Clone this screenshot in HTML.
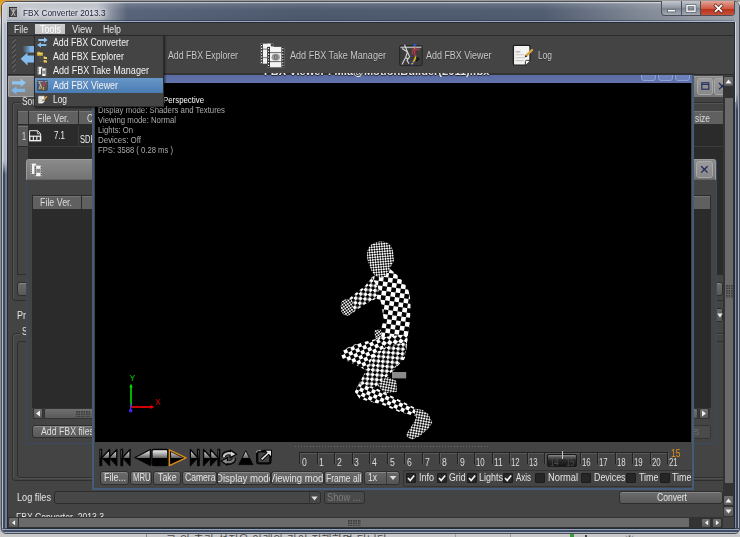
<!DOCTYPE html>
<html><head><meta charset="utf-8"><title>FBX Converter 2013.3</title>
<style>
*{box-sizing:border-box;margin:0;padding:0}
html,body{width:740px;height:537px;overflow:hidden;background:#d9d9d9;font-family:"Liberation Sans",sans-serif}
body{position:relative}
.a{position:absolute}
.t{position:absolute;white-space:pre;transform-origin:0 50%;display:block}
.btn{position:absolute;border:1px solid #2e2e2e;border-radius:3px;background:linear-gradient(#6c6c6c,#595959);box-shadow:inset 0 1px 0 #868686;overflow:hidden}
.hdr{position:absolute;background:#606060;border-top:1px solid #737373;border-bottom:1px solid #2c2c2c}
.cb{position:absolute;width:10px;height:10px;background:#262626;border:1px solid #1c1c1c;border-radius:1px}
.sbtn{position:absolute;background:linear-gradient(#707070,#5a5a5a);border:1px solid #333;border-radius:2px}
</style></head><body>


<!-- desktop strip below window -->
<div class="a" style="left:0;top:533px;width:740px;height:4px;background:#c8c8c8;overflow:hidden;font-family:'Liberation Sans','Noto Sans CJK KR',sans-serif">
  <div class="a" style="left:146px;top:0;width:1px;height:4px;background:#8a8a8a"></div>
  <span class="a" style="left:166px;top:0.500px;font-size:11px;line-height:12px;color:#4a4a4a;white-space:pre;letter-spacing:0.3px">그 외 추가 설정은 아래와 같이 진행하면 됩니다</span>
  <div class="a" style="left:455px;top:0;width:1px;height:4px;background:#9a9a9a"></div>
  <div class="a" style="left:510px;top:0;width:1px;height:4px;background:#9a9a9a"></div>
  <div class="a" style="left:570px;top:1px;width:4px;height:3px;background:#3a9a3a"></div>
  <div class="a" style="left:585px;top:1.500px;width:2px;height:3px;background:#444"></div>
  <span class="a" style="left:610px;top:0.500px;font-size:11px;line-height:12px;color:#555;white-space:pre">▼ ※ ■ ◧ ⊞</span>
</div>

<!-- window frame -->
<div class="a" style="left:0;top:0;width:3px;height:537px;background:linear-gradient(#e8a020 0,#f0b030 12px,#d9d9d9 20px,#a4a8ae 40px,#9a9ea4 160px,#8c9096 175px,#8c9096 525px,#c8c8c8 533px)"></div>
<div class="a" style="left:0;top:0;width:740px;height:2px;background:linear-gradient(90deg,#e09a20 0,#b0a090 30px,#9a9a9a 60px,#9a9a9a 100%)"></div>
<div class="a" id="frame" style="left:1px;top:1px;width:739px;height:533px;border-radius:6px 6px 5px 5px;border:1px solid #4a4f58;overflow:hidden;background:#8b98b2">
  <div class="a" style="left:0;top:0;width:740px;height:21px;background:linear-gradient(90deg,#bcc0c8 0,#b9bdc5 95px,#5a667c 125px,#4f5b70 300px,#525e73 540px,#838b98 640px,#9aa0aa 700px,#a2a7b0 100%)"></div>
  <div class="a" style="left:0;top:0;width:740px;height:21px;background:linear-gradient(rgba(255,255,255,.55) 0,rgba(255,255,255,.12) 2px,rgba(255,255,255,0) 8px,rgba(0,0,0,.06) 100%)"></div>
  <div class="a" style="left:5px;top:18px;width:729px;height:1px;background:linear-gradient(90deg,rgba(60,70,95,.25) 0,rgba(50,62,88,.75) 130px,rgba(50,62,88,.75) 560px,rgba(60,70,95,.3) 100%)"></div>
  <div class="a" style="left:5px;top:19px;width:729px;height:1px;background:rgba(190,200,215,.7)"></div>
  <div class="a" style="left:0;top:21px;width:6px;height:510px;background:linear-gradient(90deg,#a2a8b2 0,#9ea5b0 1px,#3c4962 1.400px,#3a4760 2.800px,#727c8c 3.200px,#727c8c 4.600px,#1e2838 5px)"></div>
  <div class="a" style="left:0;top:0;width:5px;height:175px;background:linear-gradient(#c6cbd4 0,#c2c8d2 158px,rgba(194,200,210,0) 172px)"></div>
  <div class="a" style="left:2px;top:21px;width:1.500px;height:140px;background:rgba(160,170,186,.55)"></div>
  <div class="a" style="left:732px;top:21px;width:6px;height:512px;background:linear-gradient(90deg,#1e2838 0,#1e2838 0.400px,#a4adbc 0.800px,#9aa4b6 1.400px,#3e4a64 1.800px,#3c4862 3.600px,#a4acba 4px,#a8b0be 5px,#a8b0be 6px)"></div>
  <div class="a" style="left:732.400px;top:0px;width:6px;height:120px;background:linear-gradient(rgba(160,166,176,1) 0,rgba(158,165,176,1) 92px,rgba(158,165,176,0) 108px)"></div>
  <div class="a" style="left:732.500px;top:20px;width:1px;height:80px;background:rgba(225,230,238,.8)"></div>
  <div class="a" style="left:0;top:526px;width:740px;height:6px;background:linear-gradient(#1e2838 0,#1e2838 0.400px,#9aa6b8 0.800px,#98a4b6 1.500px,#3e4c66 1.900px,#3e4c66 3.500px,#a8b0c0 3.900px,#aab2c2 100%)"></div>
  <div class="a" style="left:0;top:0;width:737px;height:531px;border-radius:5px;box-shadow:inset 1px 1px 0 rgba(255,255,255,.3)"></div>
</div>
<svg class="a" style="left:8.500px;top:6.800px" width="8.800" height="10.600" viewBox="0 0 10 12"><rect x="0.5" y="0.5" width="9" height="11" fill="#4a4a4a" stroke="#1e1e1e"/><path d="M2.5 2.5 L5 6 L3 10 M7.5 2.5 L5 6 L7 10 M5 1.5 V6" stroke="#cfcfcf" stroke-width="1" fill="none"/><rect x="1" y="1" width="8" height="1.6" fill="#8d8d8d"/></svg>
<span class="t" style="left:22.5px;top:6.5px;font-size:9.5px;line-height:12px;color:#1d1d3a;transform:scaleX(0.8727);text-shadow:0 0 4px #fff,0 0 7px #fff,0 0 10px #fff">FBX Converter 2013.3</span>

<!-- caption buttons -->
<div class="a" style="left:661px;top:1px;width:74px;height:15px;border:1px solid #4a4f58;border-top:none;border-radius:0 0 4px 4px;background:linear-gradient(#c3c8cf,#8f96a1 50%,#7d8591 51%,#a2a9b3);overflow:hidden">
  <div class="a" style="left:19px;top:0;width:1px;height:15px;background:#4a4f58"></div>
  <div class="a" style="left:38px;top:0;width:36px;height:15px;border-left:1px solid #4a4f58;background:linear-gradient(#e2a597,#cf5a45 50%,#b8321b 51%,#c9553c)"></div>
  <svg class="a" style="left:0;top:0" width="74" height="15" viewBox="0 0 74 15">
    <rect x="5.5" y="8.5" width="8" height="2.4" fill="#fff" stroke="#50555e" stroke-width="0.7"/>
    <rect x="25" y="4.6" width="8" height="5.6" fill="none" stroke="#50555e" stroke-width="2.6"/>
    <rect x="25" y="4.6" width="8" height="5.6" fill="none" stroke="#fff" stroke-width="1.4"/>
    <path d="M53.6 4.6 L59.4 10.2 M59.4 4.600 L53.6 10.2" stroke="#5a2a22" stroke-width="3.2" stroke-linecap="square"/>
    <path d="M53.6 4.6 L59.4 10.2 M59.4 4.600 L53.6 10.2" stroke="#fff" stroke-width="1.800" stroke-linecap="square"/>
  </svg>
</div>

<!-- client area -->
<div class="a" id="client" style="left:7px;top:22px;width:727.500px;height:506.500px;background:#444;border:1px solid #232b38"></div>

<!-- menubar -->
<div class="a" style="left:8px;top:35px;width:726px;height:1px;background:#2b2b2b"></div>
<span class="t" style="left:14px;top:23.5px;font-size:10px;line-height:12px;color:#e4e4e4;transform:scaleX(0.8682);">File</span>
<div class="a" style="left:35px;top:24px;width:30px;height:10px;background:linear-gradient(#d0d0d0,#c2c2c2)"></div>
<span class="t" style="left:40px;top:23.5px;font-size:10px;line-height:12px;color:#ffffff;transform:scaleX(0.8990);">Tools</span>
<span class="t" style="left:72px;top:23.5px;font-size:10px;line-height:12px;color:#e4e4e4;transform:scaleX(0.9302);">View</span>
<span class="t" style="left:103px;top:23.5px;font-size:10px;line-height:12px;color:#e4e4e4;transform:scaleX(0.8747);">Help</span>

<!-- toolbar -->
<div class="a" style="left:8px;top:74px;width:726px;height:1px;background:#2b2b2b"></div>
<div class="a" style="left:12px;top:38px;width:4px;height:34px;background:repeating-linear-gradient(135deg,#5c5c5c 0 1px,#363636 1px 2px,#444 2px 3.5px)"></div>
<svg class="a" style="left:16px;top:38px" width="22" height="34" viewBox="0 0 22 34"><defs><linearGradient id="ca" x1="0" x2="1"><stop offset="0" stop-color="#6ea7dc" stop-opacity="0.1"/><stop offset="0.5" stop-color="#79b1e6"/><stop offset="1" stop-color="#8cc0ef"/></linearGradient></defs><rect x="7" y="8" width="15" height="6.5" fill="url(#ca)"/><path d="M4.6 20.8 L11.5 14.5 V17.6 H22 V24.4 H11.5 V27.6 Z" fill="#86bbec"/></svg>
<span class="t" style="left:168px;top:49.5px;font-size:10px;line-height:12px;color:#c8c8c8;transform:scaleX(0.8745);text-shadow:0 1px 0 #2e2e2e">Add FBX Explorer</span>
<span class="t" style="left:290px;top:49.5px;font-size:10px;line-height:12px;color:#c8c8c8;transform:scaleX(0.9057);text-shadow:0 1px 0 #2e2e2e">Add FBX Take Manager</span>
<span class="t" style="left:425.6px;top:49.5px;font-size:10px;line-height:12px;color:#c8c8c8;transform:scaleX(0.8936);text-shadow:0 1px 0 #2e2e2e">Add FBX Viewer</span>
<span class="t" style="left:538px;top:49.5px;font-size:10px;line-height:12px;color:#c8c8c8;transform:scaleX(0.8390);text-shadow:0 1px 0 #2e2e2e">Log</span>


<!-- toolbar icons -->
<svg class="a" style="left:260px;top:43px" width="25" height="25" viewBox="0 0 25 25">
  <rect x="0.3" y="0.7" width="13" height="20" fill="#f2f2f2"/>
  <rect x="0.3" y="0.7" width="2.6" height="20" fill="#2c2c2c"/>
  <path d="M1.6 2 V20.5" stroke="#f4f4f4" stroke-width="1.1" stroke-dasharray="1.3 1.5"/>
  <rect x="3" y="5.6" width="10" height="1" fill="#777"/><rect x="3" y="14.2" width="10" height="1" fill="#777"/>
  <path d="M10 0.7 H13.3 V3.4 H10Z" fill="#444"/>
  <rect x="7.2" y="3.9" width="17" height="20.4" fill="#f4f4f4"/>
  <path d="M7.2 3.9 H10.8 V0.7 H7.2Z" fill="#f4f4f4"/>
  <rect x="7.2" y="3.9" width="2.8" height="20.4" fill="#2a2a2a"/><rect x="21.4" y="3.9" width="2.8" height="20.4" fill="#2a2a2a"/>
  <path d="M8.6 5 V24 M22.8 5 V24" stroke="#f4f4f4" stroke-width="1.1" stroke-dasharray="1.3 1.5"/>
  <rect x="10" y="9.2" width="11.4" height="0.9" fill="#555"/><rect x="10" y="18.2" width="11.4" height="0.9" fill="#555"/>
  <ellipse cx="15.7" cy="14.2" rx="4.2" ry="3.4" fill="#9a9a9a"/><ellipse cx="15.7" cy="14.2" rx="1.4" ry="2.3" fill="none" stroke="#555" stroke-width="0.8"/>
</svg>
<svg class="a" style="left:398px;top:42px" width="26" height="26" viewBox="0 0 26 26">
  <rect x="1.6" y="3.6" width="22.6" height="20" rx="1.6" fill="#3c3c3c" stroke="#262626" stroke-width="1"/>
  <rect x="2.4" y="4.6" width="21" height="1.5" fill="#a9adb2"/>
  <path d="M6.5 2.8 L9.5 10 L7.6 15.5 L4 22.5 M9.5 10 L4.2 6.5 M9.5 10 L11.6 14.8 L9 18.4 L11 21.8 M7.6 15.5 L10 17" stroke="#d6d6d6" stroke-width="1.1" fill="none"/>
  <path d="M15.2 3.2 C15.5 1.4 17.6 1.2 18.4 2.4 C18.8 3.4 18 4.8 16.6 5 Z" fill="#2f52c8"/>
  <path d="M16.4 5.2 L17.4 7 L21.6 8 M17 7 L14.6 8 L14.2 12.4 M16.8 7.2 L16.6 12.8 L18.4 14.4" stroke="#a83a4a" stroke-width="1.5" fill="none"/>
  <circle cx="16.5" cy="5.4" r="1" fill="#e6a85a"/>
  <path d="M18 14.4 L16.8 17.4 L15 20.4 L13.6 22.6" stroke="#d6b428" stroke-width="1.7" fill="none"/>
  <path d="M18.4 15 L20.6 17 L18 19" stroke="#141414" stroke-width="1.6" fill="none"/>
  <path d="M13 20.4 H15.6 M13.4 22.8 H15.8" stroke="#3a3ac0" stroke-width="1.1"/>
</svg>
<svg class="a" style="left:512px;top:44px" width="24" height="23" viewBox="0 0 24 23">
  <path d="M2.6 1.4 H16.4 Q18 1.4 18 3 V16.2 L13.4 21.2 H2.6 Q1.4 21.2 1.4 20 V2.6 Q1.4 1.4 2.6 1.4Z" fill="#f3f3f1" stroke="#1f1f1f" stroke-width="1.3"/>
  <path d="M13.4 21.2 V17.4 Q13.4 16.4 14.4 16.4 H18" fill="#fff" stroke="#1f1f1f" stroke-width="0.9"/>
  <path d="M3.6 7.8 H8.4" stroke="#b9b9b9" stroke-width="1.5"/>
  <path d="M3.6 10.8 H12.4 M3.6 13.8 H12.8 M3.6 16.6 H11.6" stroke="#c8c8c8" stroke-width="1.1"/>
  <path d="M14.4 11.6 L20 6" stroke="#d9a441" stroke-width="2.4" stroke-linecap="round"/>
  <path d="M12.6 13.6 L13.6 11 L15.2 12.6 Z" fill="#222"/>
</svg>

<!-- MDI child 1 -->
<div class="a" style="left:8px;top:76px;width:715px;height:21px;background:linear-gradient(#8a8a8a,#787878);border-top:1px solid #9a9a9a"></div>
<div class="a" style="left:8px;top:76px;width:27px;height:21px;background:linear-gradient(#959595,#838383);border:1px solid #a4a4a4;border-radius:2px"></div>
<div class="a" style="left:697px;top:78px;width:16px;height:17px;background:linear-gradient(#9a9a9a,#888);border:1px solid #a8a8a8;border-radius:3px"></div>
<svg class="a" style="left:701px;top:82px" width="9" height="9" viewBox="0 0 9 9"><rect x="0.8" y="0.8" width="7" height="6.4" fill="none" stroke="#1f2a5c" stroke-width="1.1"/><path d="M0.8 2.4 H7.8" stroke="#1f2a5c" stroke-width="1"/></svg>
<div class="a" style="left:714px;top:78px;width:16px;height:17px;background:linear-gradient(#9a9a9a,#888);border:1px solid #a8a8a8;border-radius:3px"></div>
<svg class="a" style="left:718px;top:82px" width="9" height="9" viewBox="0 0 9 9"><path d="M1 1 L7.400 7.400 M7.400 1 L1 7.400" stroke="#1f2a5c" stroke-width="1.3"/></svg>
<svg class="a" style="left:9px;top:77px" width="20" height="19" viewBox="0 0 20 19"><path d="M3 4.2 H11.5 V1.6 L17 5.8 L11.5 10 V7.4 H3 Z" fill="#8ec4f0"/><path d="M16 11.8 H7.5 V9.2 L2 13.4 L7.5 17.6 V15 H16 Z" fill="#7db6e8"/></svg>

<!-- groupbox source -->
<div class="a" style="left:12px;top:102px;width:720px;height:199px;border:1px solid #2f2f2f;border-radius:3px;box-shadow:inset 1px 1px 0 #555"></div>
<div class="a" style="left:20px;top:97px;width:40px;height:10px;background:#444"></div>
<span class="t" style="left:22px;top:95.5px;font-size:10px;line-height:12px;color:#e4e4e4;transform:scaleX(0.8421);">Source files</span>
<!-- table 1 -->
<div class="a" style="left:18px;top:111px;width:705px;height:164px;background:#2b2b2b"></div>
<div class="a" style="left:18px;top:111px;width:10px;height:164px;background:#444"></div>
<div class="hdr" style="left:18px;top:111px;width:10px;height:14px"></div>
<div class="hdr" style="left:29px;top:111px;width:49px;height:14px"></div>
<div class="hdr" style="left:79px;top:111px;width:644px;height:14px"></div>
<span class="t" style="left:37px;top:112.5px;font-size:10px;line-height:12px;color:#dcdcdc;transform:scaleX(0.8854);">File Ver.</span>
<span class="t" style="left:87px;top:112.5px;font-size:10px;line-height:12px;color:#dcdcdc;transform:scaleX(0.8294);">C</span>
<span class="t" style="left:695px;top:112.5px;font-size:10px;line-height:12px;color:#dcdcdc;transform:scaleX(0.8428);">size</span>
<div class="hdr" style="left:18px;top:126px;width:10px;height:21px;background:#5a5a5a"></div>
<span class="t" style="left:21.5px;top:130.5px;font-size:10px;line-height:12px;color:#dcdcdc;transform:scaleX(0.7191);">1</span>
<div class="a" style="left:28px;top:146px;width:695px;height:1px;background:#3c3c3c"></div>
<div class="a" style="left:78px;top:126px;width:1px;height:21px;background:#3c3c3c"></div>
<span class="t" style="left:54px;top:129.5px;font-size:10px;line-height:12px;color:#f0f0f0;transform:scaleX(0.7910);">7.1</span>
<span class="t" style="left:79.5px;top:134px;font-size:10px;line-height:12px;color:#f0f0f0;transform:scaleX(0.7538);">SDK</span>

<!-- left lower stuff -->
<div class="a" style="left:17px;top:110px;width:707px;height:165px;border:1px solid #2e2e2e;border-top:none"></div>
<div class="btn" style="left:17px;top:282px;width:706px;height:14px"></div>
<div class="a" style="left:60px;top:308px;width:663px;height:14px;background:#3c3c3c;border:1px solid #2a2a2a;border-radius:3px"></div>
<div class="a" style="left:711px;top:309px;width:11px;height:12px;background:linear-gradient(#666,#555);border-left:1px solid #333"></div>
<svg class="a" style="left:716.500px;top:313px" width="6" height="5" viewBox="0 0 6 5"><path d="M0.2 0.600 H5.800 L3 4.400Z" fill="#e8e8e8"/></svg>
<span class="t" style="left:17px;top:309.5px;font-size:10px;line-height:12px;color:#e4e4e4;transform:scaleX(0.9000);">Pr</span>
<div class="a" style="left:12px;top:333px;width:720px;height:148px;border:1px solid #2f2f2f;border-radius:3px;box-shadow:inset 1px 1px 0 #555"></div>
<div class="a" style="left:20px;top:327px;width:30px;height:10px;background:#444"></div>
<span class="t" style="left:22px;top:325.5px;font-size:10px;line-height:12px;color:#e4e4e4;transform:scaleX(0.8174);">So</span>
<div class="a" style="left:17px;top:341px;width:712px;height:137px;border:1px solid #2f2f2f;border-radius:3px;box-shadow:0 1px 0 #525252"></div>

<!-- MDI child 2 -->
<div class="a" style="left:26px;top:159px;width:691px;height:285px;background:#444;border:1px solid #394b62;border-radius:3px 3px 0 0"></div>
<div class="a" style="left:26px;top:159px;width:690px;height:21px;background:linear-gradient(#8a8a8a,#747474);border:1px solid #9a9a9a;border-bottom-color:#666;border-radius:3px 3px 0 0"></div>
<div class="a" style="left:696px;top:161px;width:17px;height:17px;background:linear-gradient(#9a9a9a,#888);border:1px solid #a8a8a8;border-radius:3px"></div>
<svg class="a" style="left:700px;top:165px" width="9" height="9" viewBox="0 0 9 9"><path d="M1.2 1.2 L7.6 7.6 M7.600 1.200 L1.200 7.600" stroke="#1f2a5c" stroke-width="1.300"/></svg>
<div class="a" style="left:31.500px;top:195px;width:679px;height:213px;background:#2b2b2b"></div>
<div class="hdr" style="left:33px;top:196px;width:48px;height:14px"></div>
<div class="hdr" style="left:82px;top:196px;width:628px;height:14px"></div>
<span class="t" style="left:40px;top:197px;font-size:10px;line-height:12px;color:#dcdcdc;transform:scaleX(0.8854);">File Ver.</span>

<svg class="a" style="left:29px;top:130px" width="13" height="12" viewBox="0 0 13 12"><path d="M0.6 11 V0.7 H8.6 L11.6 3.6 V11" fill="none" stroke="#e8e8e8" stroke-width="1"/><path d="M8.4 0.8 V3.8 H11.4" fill="none" stroke="#e8e8e8" stroke-width="0.8"/><rect x="0.2" y="5.6" width="12" height="5.8" fill="#f0f0f0"/><rect x="1.4" y="6.8" width="2.4" height="3.2" fill="#333"/><rect x="4.9" y="6.8" width="2.4" height="3.2" fill="#333"/><rect x="8.4" y="6.8" width="2.4" height="3.2" fill="#333"/></svg>
<svg class="a" style="left:30px;top:163px" width="13" height="14" viewBox="0 0 13 14"><rect x="0.6" y="0.6" width="5.6" height="10.4" fill="#f3f3f3"/><rect x="0.6" y="0.6" width="1.4" height="10.4" fill="#555"/><path d="M1.3 1 V11" stroke="#fff" stroke-width="0.7" stroke-dasharray="0.9 0.9"/><rect x="4.6" y="2.6" width="7.6" height="10.6" fill="#f6f6f6"/><rect x="4.6" y="2.6" width="1.5" height="10.600" fill="#3c3c3c"/><rect x="10.7" y="2.600" width="1.5" height="10.6" fill="#3c3c3c"/><path d="M5.35 3 V13 M11.45 3 V13" stroke="#fff" stroke-width="0.7" stroke-dasharray="0.9 0.9"/><rect x="6.3" y="5.8" width="4.2" height="4" fill="#8a8a8a"/></svg>
<!-- hscroll of table 2 -->
<div class="a" style="left:33px;top:408px;width:677px;height:11px;background:#3a3a3a"></div>
<div class="sbtn" style="left:33px;top:408px;width:10px;height:11px"></div><svg class="a" style="left:35px;top:410px" width="6" height="7" viewBox="0 0 6 7"><path d="M5 0.400 L1 3.500 L5 6.600Z" fill="#f0f0f0"/></svg>
<div class="sbtn" style="left:44px;top:408px;width:640px;height:11px"></div><div class="a" style="left:76px;top:411px;width:15px;height:6px;background-image:radial-gradient(circle at 1px 1px,#3a3a3a 0.8px,transparent 1px);background-size:2.5px 2.5px"></div>
<div class="sbtn" style="left:687px;top:408px;width:10.500px;height:11px"></div><div class="sbtn" style="left:699px;top:408px;width:10px;height:11px"></div><svg class="a" style="left:701px;top:410px" width="6" height="7" viewBox="0 0 6 7"><path d="M1 0.400 L5 3.500 L1 6.600Z" fill="#f0f0f0"/></svg>
<div class="btn" style="left:32px;top:425px;width:90px;height:13px"></div>
<span class="t" style="left:41px;top:425.5px;font-size:10px;line-height:12px;color:#dcdcdc;transform:scaleX(0.8747);">Add FBX files</span>
<div class="btn" style="left:640px;top:424.500px;width:70.500px;height:14px;background:#4b4b4b;box-shadow:none;border-color:#343434"></div><span class="t" style="left:655px;top:425.5px;font-size:10px;line-height:12px;color:#707070;transform:scaleX(0.6233);">Remove all files</span>

<!-- log row -->
<span class="t" style="left:17px;top:492px;font-size:10px;line-height:12px;color:#e4e4e4;transform:scaleX(0.9128);">Log files</span>
<div class="a" style="left:54px;top:491px;width:267px;height:13px;background:#474747;border:1px solid #2c2c2c;border-radius:3px"></div>
<div class="btn" style="left:324px;top:491px;width:41px;height:13px;background:#4a4a4a;box-shadow:none"></div>
<span class="t" style="left:326.7px;top:492px;font-size:10px;line-height:12px;color:#7c7c7c;transform:scaleX(0.9297);">Show ...</span><div class="a" style="left:309px;top:492px;width:1px;height:11px;background:#333"></div><svg class="a" style="left:311px;top:495.500px" width="7" height="5" viewBox="0 0 7 5"><path d="M0.300 0.600 H6.700 L3.500 4.400Z" fill="#dcdcdc"/></svg>
<div class="btn" style="left:619px;top:491px;width:104px;height:13px"></div>
<span class="t" style="left:657px;top:491.5px;font-size:10px;line-height:12px;color:#e4e4e4;transform:scaleX(0.8568);">Convert</span>
<span class="t" style="left:16px;top:511.5px;font-size:10px;line-height:12px;color:#e4e4e4;transform:scaleX(0.8604);">FBX Converter  2013.3</span>

<!-- main scrollbars -->
<div class="a" style="left:723px;top:76px;width:11px;height:441px;background:#333"></div>
<div class="sbtn" style="left:723px;top:76px;width:11px;height:11px"></div><svg class="a" style="left:725px;top:79px" width="7" height="5" viewBox="0 0 7 5"><path d="M0.4 4.400 L3.500 0.600 L6.600 4.400Z" fill="#f0f0f0"/></svg>
<div class="a" style="left:725px;top:98px;width:8px;height:385px;background:#6a6a6a"></div>
<div class="sbtn" style="left:723px;top:495px;width:11px;height:11px"></div><svg class="a" style="left:725px;top:498px" width="7" height="5" viewBox="0 0 7 5"><path d="M0.4 4.400 L3.500 0.600 L6.600 4.400Z" fill="#f0f0f0"/></svg>
<div class="sbtn" style="left:723px;top:506px;width:11px;height:11px"></div><svg class="a" style="left:725px;top:509px" width="7" height="5" viewBox="0 0 7 5"><path d="M0.4 0.600 L3.500 4.400 L6.600 0.600Z" fill="#f0f0f0"/></svg>
<div class="a" style="left:8px;top:517px;width:726px;height:11px;background:#333"></div>
<div class="sbtn" style="left:8px;top:517px;width:11px;height:11px"></div><svg class="a" style="left:10.500px;top:520px" width="5" height="5.600" viewBox="0 0 6 7"><path d="M5 0.400 L1 3.500 L5 6.600Z" fill="#f0f0f0"/></svg>
<div class="a" style="left:19px;top:518px;width:670px;height:9px;background:#6a6a6a"></div>
<div class="sbtn" style="left:701px;top:517.500px;width:10px;height:10.500px"></div><svg class="a" style="left:703.500px;top:520px" width="5" height="5.600" viewBox="0 0 6 7"><path d="M5 0.400 L1 3.500 L5 6.600Z" fill="#f0f0f0"/></svg>
<div class="sbtn" style="left:712px;top:517.500px;width:10px;height:10.500px"></div><svg class="a" style="left:714.500px;top:520px" width="5" height="5.600" viewBox="0 0 6 7"><path d="M1 0.400 L5 3.500 L1 6.600Z" fill="#f0f0f0"/></svg><div class="a" style="left:723px;top:517px;width:11px;height:11px;background:#444"></div>

<div class="a" style="left:348px;top:520px;width:13px;height:6px;background-image:radial-gradient(circle at 1px 1px,#3a3a3a 0.8px,transparent 1px);background-size:2.5px 2.5px"></div><div class="a" style="left:726px;top:285px;width:7px;height:13px;background-image:radial-gradient(circle at 1px 1px,#3a3a3a 0.8px,transparent 1px);background-size:2.5px 2.5px"></div>
<!-- VIEWER -->
<div class="a" id="viewer" style="left:92px;top:72px;width:602px;height:418px;background:#444;border:2px solid #445c78"></div>
<div class="a" style="left:94px;top:75px;width:598px;height:8px;background:linear-gradient(#5b6ca4,#6273ab)"></div>
<div class="a" style="left:95px;top:82.500px;width:596px;height:359.500px;background:#000"></div>
<span class="t" style="left:163px;top:95px;font-size:9px;line-height:11px;color:#ffffff;transform:scaleX(0.8718);">Perspective</span>
<span class="t" style="left:98px;top:105px;font-size:9px;line-height:11px;color:#ababab;transform:scaleX(0.8644);">Display mode: Shaders and Textures</span>
<span class="t" style="left:98px;top:115px;font-size:9px;line-height:11px;color:#ababab;transform:scaleX(0.8631);">Viewing mode: Normal</span>
<span class="t" style="left:98px;top:125px;font-size:9px;line-height:11px;color:#ababab;transform:scaleX(0.8530);">Lights: On</span>
<span class="t" style="left:98px;top:135px;font-size:9px;line-height:11px;color:#ababab;transform:scaleX(0.8801);">Devices: Off</span>
<span class="t" style="left:98px;top:145px;font-size:9px;line-height:11px;color:#ababab;transform:scaleX(0.8518);">FPS: 3588 ( 0.28 ms )</span>

<!-- viewer title buttons -->
<div class="a" style="left:641px;top:70px;width:15px;height:11px;border:1px solid #8fa0d4;border-radius:3px;background:#6e80bb"></div>
<div class="a" style="left:658px;top:70px;width:15px;height:11px;border:1px solid #8fa0d4;border-radius:3px;background:#6e80bb"></div>
<div class="a" style="left:675px;top:70px;width:15px;height:11px;border:1px solid #8fa0d4;border-radius:3px;background:#6e80bb"></div>
<div class="a" style="left:92px;top:70px;width:602px;height:5px;background:#444"></div>

<div class="a" style="left:92px;top:73px;width:602px;height:2px;background:#343434"></div><div class="a" style="left:262px;top:73px;width:230px;height:4px;overflow:hidden"><span class="t" style="left:1.5px;top:-6.6px;font-size:10px;line-height:12px;color:#e8e8e8;transform:scaleX(1.1081);font-weight:bold;text-shadow:0 0 1px #222,0 1px 1px #222">FBX Viewer : Mia@MotionBuilder(2011).fbx</span></div>


<!-- figure -->
<svg class="a" style="left:330px;top:235px;filter:blur(.3px)" width="110" height="210" viewBox="330 235 110 210">
  <defs>
    <pattern id="ck" width="9.2" height="9.2" patternUnits="userSpaceOnUse" patternTransform="rotate(8)"><rect width="9.2" height="9.2" fill="#050505"/><rect width="4.6" height="4.6" fill="#fff"/><rect x="4.6" y="4.6" width="4.6" height="4.6" fill="#fff"/></pattern><pattern id="ck2" width="6.6" height="6.6" patternUnits="userSpaceOnUse" patternTransform="rotate(-40)"><rect width="6.6" height="6.6" fill="#050505"/><rect width="3.3" height="3.3" fill="#fff"/><rect x="3.3" y="3.3" width="3.3" height="3.3" fill="#fff"/></pattern><pattern id="ck3" width="7.6" height="7.6" patternUnits="userSpaceOnUse" patternTransform="rotate(-24)"><rect width="7.6" height="7.6" fill="#050505"/><rect width="3.8" height="3.8" fill="#fff"/><rect x="3.8" y="3.8" width="3.8" height="3.8" fill="#fff"/></pattern><pattern id="ck4" width="8" height="8" patternUnits="userSpaceOnUse" patternTransform="rotate(38)"><rect width="8" height="8" fill="#050505"/><rect width="4" height="4" fill="#fff"/><rect x="4" y="4" width="4" height="4" fill="#fff"/></pattern><pattern id="ck5" width="7.6" height="7.6" patternUnits="userSpaceOnUse" patternTransform="rotate(26)"><rect width="7.6" height="7.6" fill="#050505"/><rect width="3.8" height="3.8" fill="#fff"/><rect x="3.8" y="3.8" width="3.8" height="3.8" fill="#fff"/></pattern><pattern id="ckf" width="3.6" height="3.6" patternUnits="userSpaceOnUse" patternTransform="rotate(40)"><rect width="3.6" height="3.6" fill="#101010"/><rect width="1.8" height="1.8" fill="#f4f4f4"/><rect x="1.8" y="1.8" width="1.8" height="1.8" fill="#f4f4f4"/></pattern><pattern id="ckg" width="3.8" height="3.8" patternUnits="userSpaceOnUse" patternTransform="rotate(-35)"><rect width="3.8" height="3.8" fill="#141414"/><rect width="1.9" height="1.9" fill="#e8e8e8"/><rect x="1.9" y="1.9" width="1.9" height="1.9" fill="#e8e8e8"/></pattern><pattern id="ckh" width="3.4" height="3.4" patternUnits="userSpaceOnUse" patternTransform="rotate(10)"><rect width="3.4" height="3.4" fill="#101010"/><rect width="1.7" height="1.7" fill="#eee"/><rect x="1.7" y="1.7" width="1.7" height="1.7" fill="#eee"/></pattern>
  </defs>
  <!-- torso -->
  <path d="M372 277 L390 269 Q401 277 408 289 Q411 297 410.400 310 L409.800 324 L408.600 332 L406.800 348 L404 360 L384 360 L376 342 L381 330 L383.700 319 L381 302 L376 298 Z" fill="url(#ck)"/>
  <!-- small bump (other hand) -->
  <path d="M374.500 330 L381 329.500 L382 337.500 L375 338Z" fill="url(#ckh)"/>
  <!-- arm -->
  <path d="M372 277 L365.400 285.400 L354.500 294 L349 298.500 L352.500 313 L365.400 304 L376.400 298.500 L379 290Z" fill="url(#ck2)"/>
  <!-- hand -->
  <path d="M342 301 Q340 306 341 311 Q344 317 349.500 315.600 L353.500 311 L352 300 Q347 297.500 342 301Z" fill="url(#ckh)"/>
  <!-- head -->
  <path d="M380 241.600 Q388 241.400 391.600 247 Q394 252 393.400 257 L394.200 260 L392.600 263.500 L389.700 268.400 L387 274 Q384 278.500 379 277.500 Q374 276 371.600 271 L369.600 266 Q366.500 259 367 254 Q367.600 247 372 244 Q376 241.800 380 241.600Z" fill="url(#ckf)"/>
  <path d="M376 338 L408 334 L405 358 L392 372 L372 378 L366 370Z" fill="url(#ck4)"/>
  <!-- raised thigh (left) -->
  <path d="M378 338.500 L366 341.500 L353 345 L344 349.500 L340.600 353 L342 358.500 L349 362 L356.300 365 L366.200 370.500 L378 364 L388 350 Z" fill="url(#ck3)"/>
  <!-- right thigh -->
  <path d="M388 346 L406 342 L404.500 356.300 L391.700 372 L381.800 382 L374.700 387.600 L366 399 L359.800 399 L354.900 391.800 L359 383.300 L366.200 370.500 L374.700 353.500 Z" fill="url(#ck2)"/>
  <!-- shin -->
  <path d="M359 384 L374.700 387.600 L394.600 397.500 L414.400 407.400 L416.600 416.600 L398.800 411.700 L381.800 404.600 L359.800 399 L354.900 391.800Z" fill="url(#ck5)"/>
  <!-- foot -->
  <path d="M415.500 408.800 L422.700 410 L428.500 414.200 L432.300 422.600 L428.500 428.500 L420 436 L411.800 439.800 L405.900 436 L407.600 431.900 L414.300 421.800 L416.400 416.800 L414.700 414.200Z" fill="url(#ckg)"/>
  <!-- other foot -->
  <path d="M388 377 L396.700 381 L396.700 392 L385 393.200 L377.600 385.500 L382 379.500Z" fill="url(#ckg)"/>
  <rect x="392" y="372" width="14.200" height="6.400" fill="#8a8a8a"/>
</svg>

<!-- axis gizmo -->
<svg class="a" style="left:120px;top:365px" width="50" height="55" viewBox="0 0 50 55">
  <path d="M11 42 V20" stroke="#00e000" stroke-width="1.6"/><path d="M11 18.4 L9.4 22.4 H12.6Z" fill="#00e000"/>
  <path d="M11 42 H32" stroke="#e80000" stroke-width="1.8"/><path d="M34.4 42 L30.4 40 V44Z" fill="#e80000"/>
  <path d="M10.6 38.5 V46" stroke="#3a30ff" stroke-width="1.2"/><rect x="9.2" y="44.2" width="3" height="3" fill="#4a22ff"/>
  <text x="9.800" y="15.800" font-family="Liberation Sans, sans-serif" font-size="9.500" fill="#00d000" transform="translate(1.5 0) scale(0.85 1)">Y</text>
  <text x="40.600" y="40" font-family="Liberation Sans, sans-serif" font-size="9.500" fill="#d80000" transform="scale(0.86 1)">X</text>
</svg>

<!-- playback icons -->
<svg class="a" style="left:96px;top:444px" width="190" height="26" viewBox="96 444 190 26">
  <defs>
    <linearGradient id="gl" x1="0" y1="449.5" x2="0" y2="465.5" gradientUnits="userSpaceOnUse">
      <stop offset="0" stop-color="#f4f4f4"/><stop offset="0.08" stop-color="#e6e6e6"/><stop offset="0.3" stop-color="#a8a8a8"/><stop offset="0.5" stop-color="#6a6a6a"/><stop offset="0.54" stop-color="#000"/><stop offset="1" stop-color="#000"/>
    </linearGradient>
  </defs>
  <g fill="url(#gl)" stroke="#060606" stroke-width="1.3" stroke-linejoin="round">
    <rect x="100" y="449.5" width="1.6" height="16"/>
    <path d="M102 457.5 L109.6 449.5 V465.5Z M109.2 457.5 L116.8 449.5 V465.5Z"/>
    <rect x="121" y="449.5" width="1.6" height="16"/>
    <path d="M122.6 457.5 L130 449.5 V465.5Z"/>
    <path d="M135 457.5 L150.4 449.5 V465.5Z"/>
    <rect x="152" y="449.5" width="15.8" height="16" rx="1.6"/>
    <path d="M170.6 451.400 L183.800 457.800 L170.600 464.200Z" stroke-width="1"/>
    <path d="M190.4 449.5 L197.6 457.5 L190.4 465.5Z"/>
    <rect x="197.6" y="449.5" width="1.6" height="16"/>
    <path d="M203.6 449.5 L211 457.5 L203.6 465.5Z M210.6 449.5 L218 457.5 L210.6 465.5Z"/>
    <rect x="218" y="449.5" width="1.6" height="16"/>
    <path d="M245.800 450.600 L252.800 464.600 H238.800Z" stroke-width="1"/>
  </g>
  <path d="M169.4 449.8 L186 457.8 L169.4 465.6Z" fill="none" stroke="#dd8a17" stroke-width="1.3" stroke-linejoin="round"/>
  <!-- loop -->
  <g fill="none">
    <path d="M223.600 457.400 C223.400 452.600 229.600 451.600 232.400 453.600" stroke="#080808" stroke-width="4.400"/>
    <path d="M234 458 C234.200 462.800 228 463.800 225.200 461.800" stroke="#080808" stroke-width="4.400"/>
    <path d="M230.400 450 L236.600 454.200 L230.200 457.600Z" fill="#080808" stroke="#080808" stroke-width="1.200" stroke-linejoin="round"/>
    <path d="M227.200 465.200 L221 461 L227.400 457.800Z" fill="#080808" stroke="#080808" stroke-width="1.200" stroke-linejoin="round"/>
    <path d="M223.800 457.200 C223.800 453.200 229.200 452.400 232 454" stroke="#c4c4c4" stroke-width="2.200"/>
    <path d="M231 451.400 L235.400 454.300 L230.800 456.600Z" fill="#dadada"/>
    <path d="M233.800 458.200 C233.800 462.200 228.400 463 225.600 461.400" stroke="#7c7c7c" stroke-width="2.200"/>
    <path d="M226.600 464 L222.200 461 L226.800 458.800Z" fill="#8a8a8a"/>
  </g>
  <!-- popout -->
  <rect x="257.200" y="451.400" width="13.200" height="12" rx="1.800" fill="none" stroke="#060606" stroke-width="2.300"/>
  <path d="M256.400 452.600 Q256.400 450.600 258.400 450.600 H261" stroke="#b8b8b8" stroke-width="0.900" fill="none"/>
  <path d="M261.200 459.800 L269.600 451.800" stroke="#060606" stroke-width="3.600"/>
  <path d="M263.600 449.800 H272 V458.200Z" fill="#060606"/>
  <path d="M261.600 459.400 L269.400 452" stroke="#ececec" stroke-width="1.500"/>
  <path d="M265.800 450.800 H271 V456Z" fill="#e4e4e4"/>
</svg>

<!-- timeline -->
<div class="a" style="left:295px;top:446px;width:194px;height:1px;background:repeating-linear-gradient(90deg,#6a6a6a 0 1.5px,#444 1.5px 3px)"></div>
<div class="a" style="left:299px;top:452px;width:369px;height:1px;background:#222"></div>
<div class="a" style="left:299px;top:453px;width:369px;height:1px;background:#5a5a5a"></div>
<div class="a" style="left:299.3px;top:453px;width:1px;height:11px;background:#222"></div><div class="a" style="left:300.3px;top:453px;width:1px;height:11px;background:#5a5a5a"></div><span class="t" style="left:301.9px;top:456.5px;font-size:10px;line-height:12px;color:#dcdcdc;transform:scaleX(0.8629);">0</span><div class="a" style="left:316.8px;top:453px;width:1px;height:11px;background:#222"></div><div class="a" style="left:317.8px;top:453px;width:1px;height:11px;background:#5a5a5a"></div><span class="t" style="left:319.4px;top:456.5px;font-size:10px;line-height:12px;color:#dcdcdc;transform:scaleX(0.8629);">1</span><div class="a" style="left:334.3px;top:453px;width:1px;height:11px;background:#222"></div><div class="a" style="left:335.3px;top:453px;width:1px;height:11px;background:#5a5a5a"></div><span class="t" style="left:336.9px;top:456.5px;font-size:10px;line-height:12px;color:#dcdcdc;transform:scaleX(0.8629);">2</span><div class="a" style="left:351.8px;top:453px;width:1px;height:11px;background:#222"></div><div class="a" style="left:352.8px;top:453px;width:1px;height:11px;background:#5a5a5a"></div><span class="t" style="left:354.4px;top:456.5px;font-size:10px;line-height:12px;color:#dcdcdc;transform:scaleX(0.8629);">3</span><div class="a" style="left:369.3px;top:453px;width:1px;height:11px;background:#222"></div><div class="a" style="left:370.3px;top:453px;width:1px;height:11px;background:#5a5a5a"></div><span class="t" style="left:371.9px;top:456.5px;font-size:10px;line-height:12px;color:#dcdcdc;transform:scaleX(0.8629);">4</span><div class="a" style="left:386.9px;top:453px;width:1px;height:11px;background:#222"></div><div class="a" style="left:387.9px;top:453px;width:1px;height:11px;background:#5a5a5a"></div><span class="t" style="left:389.5px;top:456.5px;font-size:10px;line-height:12px;color:#dcdcdc;transform:scaleX(0.8629);">5</span><div class="a" style="left:404.4px;top:453px;width:1px;height:11px;background:#222"></div><div class="a" style="left:405.4px;top:453px;width:1px;height:11px;background:#5a5a5a"></div><span class="t" style="left:407px;top:456.5px;font-size:10px;line-height:12px;color:#dcdcdc;transform:scaleX(0.8629);">6</span><div class="a" style="left:421.9px;top:453px;width:1px;height:11px;background:#222"></div><div class="a" style="left:422.9px;top:453px;width:1px;height:11px;background:#5a5a5a"></div><span class="t" style="left:424.5px;top:456.5px;font-size:10px;line-height:12px;color:#dcdcdc;transform:scaleX(0.8629);">7</span><div class="a" style="left:439.4px;top:453px;width:1px;height:11px;background:#222"></div><div class="a" style="left:440.4px;top:453px;width:1px;height:11px;background:#5a5a5a"></div><span class="t" style="left:442px;top:456.5px;font-size:10px;line-height:12px;color:#dcdcdc;transform:scaleX(0.8629);">8</span><div class="a" style="left:456.9px;top:453px;width:1px;height:11px;background:#222"></div><div class="a" style="left:457.9px;top:453px;width:1px;height:11px;background:#5a5a5a"></div><span class="t" style="left:459.5px;top:456.5px;font-size:10px;line-height:12px;color:#dcdcdc;transform:scaleX(0.8629);">9</span><div class="a" style="left:474.4px;top:453px;width:1px;height:11px;background:#222"></div><div class="a" style="left:475.4px;top:453px;width:1px;height:11px;background:#5a5a5a"></div><span class="t" style="left:476.4px;top:456.5px;font-size:10px;line-height:12px;color:#dcdcdc;transform:scaleX(0.7820);">10</span><div class="a" style="left:491.9px;top:453px;width:1px;height:11px;background:#222"></div><div class="a" style="left:492.9px;top:453px;width:1px;height:11px;background:#5a5a5a"></div><span class="t" style="left:493.9px;top:456.5px;font-size:10px;line-height:12px;color:#dcdcdc;transform:scaleX(0.8373);">11</span><div class="a" style="left:509.4px;top:453px;width:1px;height:11px;background:#222"></div><div class="a" style="left:510.4px;top:453px;width:1px;height:11px;background:#5a5a5a"></div><span class="t" style="left:511.4px;top:456.5px;font-size:10px;line-height:12px;color:#dcdcdc;transform:scaleX(0.7820);">12</span><div class="a" style="left:526.9px;top:453px;width:1px;height:11px;background:#222"></div><div class="a" style="left:527.9px;top:453px;width:1px;height:11px;background:#5a5a5a"></div><span class="t" style="left:528.9px;top:456.5px;font-size:10px;line-height:12px;color:#dcdcdc;transform:scaleX(0.7820);">13</span><div class="a" style="left:544.4px;top:453px;width:1px;height:11px;background:#222"></div><div class="a" style="left:545.4px;top:453px;width:1px;height:11px;background:#5a5a5a"></div><div class="a" style="left:562.0px;top:453px;width:1px;height:11px;background:#222"></div><div class="a" style="left:563.0px;top:453px;width:1px;height:11px;background:#5a5a5a"></div><div class="a" style="left:579.5px;top:453px;width:1px;height:11px;background:#222"></div><div class="a" style="left:580.5px;top:453px;width:1px;height:11px;background:#5a5a5a"></div><span class="t" style="left:581.5px;top:456.5px;font-size:10px;line-height:12px;color:#dcdcdc;transform:scaleX(0.7820);">16</span><div class="a" style="left:597.0px;top:453px;width:1px;height:11px;background:#222"></div><div class="a" style="left:598.0px;top:453px;width:1px;height:11px;background:#5a5a5a"></div><span class="t" style="left:599px;top:456.5px;font-size:10px;line-height:12px;color:#dcdcdc;transform:scaleX(0.7820);">17</span><div class="a" style="left:614.5px;top:453px;width:1px;height:11px;background:#222"></div><div class="a" style="left:615.5px;top:453px;width:1px;height:11px;background:#5a5a5a"></div><span class="t" style="left:616.5px;top:456.5px;font-size:10px;line-height:12px;color:#dcdcdc;transform:scaleX(0.7820);">18</span><div class="a" style="left:632.0px;top:453px;width:1px;height:11px;background:#222"></div><div class="a" style="left:633.0px;top:453px;width:1px;height:11px;background:#5a5a5a"></div><span class="t" style="left:634px;top:456.5px;font-size:10px;line-height:12px;color:#dcdcdc;transform:scaleX(0.7820);">19</span><div class="a" style="left:649.5px;top:453px;width:1px;height:11px;background:#222"></div><div class="a" style="left:650.5px;top:453px;width:1px;height:11px;background:#5a5a5a"></div><span class="t" style="left:651.5px;top:456.5px;font-size:10px;line-height:12px;color:#dcdcdc;transform:scaleX(0.7820);">20</span><div class="a" style="left:667.0px;top:453px;width:1px;height:11px;background:#222"></div><div class="a" style="left:668.0px;top:453px;width:1px;height:11px;background:#5a5a5a"></div><span class="t" style="left:669px;top:456.5px;font-size:10px;line-height:12px;color:#dcdcdc;transform:scaleX(0.7820);">21</span>
<div class="a" style="left:547px;top:454px;width:30px;height:13px;border-radius:2px;background:linear-gradient(#8a8a8a 0,#5a5a5a 18%,#2c2c2c 45%,#161616 100%);border:1px solid #1a1a1a"></div>
<div class="a" style="left:561.5px;top:451px;width:1px;height:8px;background:#c8c8c8"></div>
<span class="t" style="left:550px;top:456.5px;font-size:10px;line-height:12px;color:#4c4c4c;transform:scaleX(0.7640);">14</span>
<span class="t" style="left:565.5px;top:456.5px;font-size:10px;line-height:12px;color:#4c4c4c;transform:scaleX(0.7640);">15</span>
<span class="t" style="left:671px;top:447.5px;font-size:10px;line-height:12px;color:#e8921c;transform:scaleX(0.8539);">15</span>

<!-- viewer buttons row -->
<div class="btn" style="left:100px;top:471px;width:29px;height:14px"></div><span class="t" style="left:104px;top:472px;font-size:10px;line-height:12px;color:#e4e4e4;transform:scaleX(0.8997);">File...</span>
<div class="btn" style="left:130px;top:471px;width:22px;height:14px"></div><span class="t" style="left:132.5px;top:472px;font-size:10px;line-height:12px;color:#e4e4e4;transform:scaleX(0.7682);">MRU</span>
<div class="btn" style="left:153px;top:471px;width:28px;height:14px"></div><span class="t" style="left:158px;top:472px;font-size:10px;line-height:12px;color:#e4e4e4;transform:scaleX(0.8757);">Take</span>
<div class="btn" style="left:182px;top:471px;width:35px;height:14px"></div><span class="t" style="left:184.5px;top:472px;font-size:10px;line-height:12px;color:#e4e4e4;transform:scaleX(0.8573);">Camera</span>
<div class="btn" style="left:217px;top:471px;width:54px;height:14px"><span class="t" style="left:-2px;top:0.5px;font-size:10px;line-height:12px;color:#e4e4e4;transform:scaleX(0.9572);">Display mode</span></div>
<div class="btn" style="left:271px;top:471px;width:53px;height:14px"><span class="t" style="left:-3.5px;top:0.5px;font-size:10px;line-height:12px;color:#e4e4e4;transform:scaleX(0.9499);">Viewing mode</span></div>
<div class="btn" style="left:324px;top:471px;width:39px;height:14px"><span class="t" style="left:1px;top:0.5px;font-size:10px;line-height:12px;color:#e4e4e4;transform:scaleX(0.8516);">Frame all</span></div>
<div class="btn" style="left:364px;top:471px;width:36px;height:14px;background:linear-gradient(#666,#555)"></div><span class="t" style="left:368px;top:472px;font-size:10px;line-height:12px;color:#e4e4e4;transform:scaleX(0.8521);">1x</span>
<div class="a" style="left:386px;top:472px;width:1px;height:12px;background:#3c3c3c"></div>
<svg class="a" style="left:388px;top:475px" width="10" height="6" viewBox="0 0 10 6"><path d="M1.6 1 H8.4 L5 5Z" fill="#dcdcdc"/></svg>
<div class="a" style="left:403px;top:470px;width:289px;height:17px;border:1px solid #333;border-right:none;border-radius:2px 0 0 2px"></div>
<div class="cb" style="left:406px;top:472.5px"></div><svg class="a" style="left:406px;top:472.5px" width="10" height="10" viewBox="0 0 10 10"><path d="M2 5 L4.2 7.4 L8.2 2.4" stroke="#f4f4f4" stroke-width="1.6" fill="none"/></svg><span class="t" style="left:419px;top:472px;font-size:10px;line-height:12px;color:#e4e4e4;transform:scaleX(0.8989);">Info</span><div class="cb" style="left:436.5px;top:472.5px"></div><svg class="a" style="left:436.5px;top:472.5px" width="10" height="10" viewBox="0 0 10 10"><path d="M2 5 L4.2 7.4 L8.2 2.4" stroke="#f4f4f4" stroke-width="1.6" fill="none"/></svg><span class="t" style="left:449px;top:472px;font-size:10px;line-height:12px;color:#e4e4e4;transform:scaleX(0.8727);">Grid</span><div class="cb" style="left:467px;top:472.5px"></div><svg class="a" style="left:467px;top:472.5px" width="10" height="10" viewBox="0 0 10 10"><path d="M2 5 L4.2 7.4 L8.2 2.4" stroke="#f4f4f4" stroke-width="1.6" fill="none"/></svg><span class="t" style="left:479px;top:472px;font-size:10px;line-height:12px;color:#e4e4e4;transform:scaleX(0.8993);">Lights</span><div class="cb" style="left:503px;top:472.5px"></div><svg class="a" style="left:503px;top:472.5px" width="10" height="10" viewBox="0 0 10 10"><path d="M2 5 L4.2 7.4 L8.2 2.4" stroke="#f4f4f4" stroke-width="1.6" fill="none"/></svg><span class="t" style="left:516px;top:472px;font-size:10px;line-height:12px;color:#e4e4e4;transform:scaleX(0.7934);">Axis</span><div class="cb" style="left:535px;top:472.5px"></div><span class="t" style="left:548px;top:472px;font-size:10px;line-height:12px;color:#e4e4e4;transform:scaleX(0.9307);">Normal</span><div class="cb" style="left:581px;top:472.5px"></div><span class="t" style="left:594px;top:472px;font-size:10px;line-height:12px;color:#e4e4e4;transform:scaleX(0.8854);">Devices</span><div class="cb" style="left:626px;top:472.5px"></div><span class="t" style="left:639px;top:472px;font-size:10px;line-height:12px;color:#e4e4e4;transform:scaleX(0.8921);">Time</span><div class="cb" style="left:659.5px;top:472.5px"></div><span class="t" style="left:672px;top:472px;font-size:10px;line-height:12px;color:#e4e4e4;transform:scaleX(0.8921);">Time</span>

<!-- MENU dropdown -->
<div class="a" id="menu" style="left:34px;top:35px;width:130px;height:72px;background:#444;border:1px solid #2a2a2a;box-shadow:1px 1px 2px rgba(0,0,0,.6)"></div>
<div class="a" style="left:35px;top:78.400px;width:128px;height:14.600px;background:linear-gradient(#6896c8,#4a7cb3)"></div>
<span class="t" style="left:53px;top:36.5px;font-size:10px;line-height:12px;color:#f2f2f2;transform:scaleX(0.8764);">Add FBX Converter</span>
<span class="t" style="left:53px;top:51px;font-size:10px;line-height:12px;color:#f2f2f2;transform:scaleX(0.8870);">Add FBX Explorer</span>
<span class="t" style="left:53px;top:65px;font-size:10px;line-height:12px;color:#f2f2f2;transform:scaleX(0.9057);">Add FBX Take Manager</span>
<span class="t" style="left:53px;top:79.5px;font-size:10px;line-height:12px;color:#f2f2f2;transform:scaleX(0.8881);">Add FBX Viewer</span>
<span class="t" style="left:53px;top:94px;font-size:10px;line-height:12px;color:#f2f2f2;transform:scaleX(0.8390);">Log</span>


<!-- menu icons -->
<svg class="a" style="left:36px;top:36px" width="13" height="13" viewBox="0 0 13 13"><path d="M2.4 3 H8 V1.3 L11.6 4 L8 6.7 V5 H2.4Z" fill="#8fc4f0"/><path d="M10.4 8 H5 V6.3 L1 9 L5 11.7 V10 H10.4Z" fill="#84bbea"/></svg>
<svg class="a" style="left:36px;top:50px" width="13" height="14" viewBox="0 0 13 14"><path d="M1.2 2.6 Q1.2 1.8 2 1.8 H3.8 L4.6 2.6 H6.8 V5.8 H1.2Z" fill="#d9b93f"/><path d="M1.2 3.6 H6.8" stroke="#f2dc7a" stroke-width="0.7"/><path d="M7.6 6.4 H9 L9.5 6.9 H11 V9 H7.6Z M7.6 10 H9 L9.5 10.5 H11 V12.6 H7.6Z" fill="#e9cf55"/><path d="M4 6 V11.4 H7.4 M4 7.8 H7.4" stroke="#5d5d5d" stroke-width="0.7" fill="none"/></svg>
<svg class="a" style="left:37px;top:66px" width="11" height="11" viewBox="0 0 11 11"><rect x="0.8" y="0.8" width="4.4" height="7.6" fill="#f3f3f3"/><rect x="0.8" y="0.8" width="1.1" height="7.6" fill="#666"/><path d="M1.3 1 V8.4" stroke="#fff" stroke-width="0.6" stroke-dasharray="0.8 0.8"/><rect x="4" y="2.4" width="5.8" height="7.6" fill="#f6f6f6"/><rect x="4" y="2.4" width="1.2" height="7.6" fill="#444"/><rect x="8.6" y="2.4" width="1.2" height="7.6" fill="#444"/><rect x="5.4" y="4.6" width="3" height="3.2" fill="#8a8a8a"/></svg>
<svg class="a" style="left:37px;top:80px" width="11" height="11" viewBox="0 0 11 11"><rect x="0.4" y="0.6" width="10.2" height="9.8" rx="0.8" fill="#555" stroke="#3a3a3a" stroke-width="0.6"/><rect x="0.8" y="1" width="9.4" height="0.9" fill="#a0a4aa"/><path d="M2.2 1.4 L3.6 4.6 L2 9.4 M3.6 4.6 L1.6 3 M3.6 4.6 L4.6 7 L3.6 9" stroke="#cfcfcf" stroke-width="0.8" fill="none"/><path d="M6.6 1.2 L7.2 3 L7 6.4 L6.4 9.4 M7.2 3 L9.2 3.6 M7 3 L5.8 5.4" stroke="#b0404c" stroke-width="1.1" fill="none"/><circle cx="6.9" cy="1.2" r="0.9" fill="#3355cc"/><path d="M6.8 7 L6 9.8" stroke="#d8b62a" stroke-width="1.1"/></svg>
<svg class="a" style="left:37px;top:95px" width="12" height="10" viewBox="0 0 12 10"><path d="M1 0.8 H7.8 V6.4 L5.6 8.8 H1Z" fill="#f4f4f2" stroke="#3a3a3a" stroke-width="0.6"/><path d="M2 3 H5 M2 4.6 H6 M2 6.2 H5.4" stroke="#bdbdbd" stroke-width="0.7"/><path d="M6.2 5.2 L9.6 1.8" stroke="#d9a441" stroke-width="1.5" stroke-linecap="round"/><path d="M5.2 6.4 L5.8 5 L6.7 5.8Z" fill="#222"/></svg>

</body></html>
